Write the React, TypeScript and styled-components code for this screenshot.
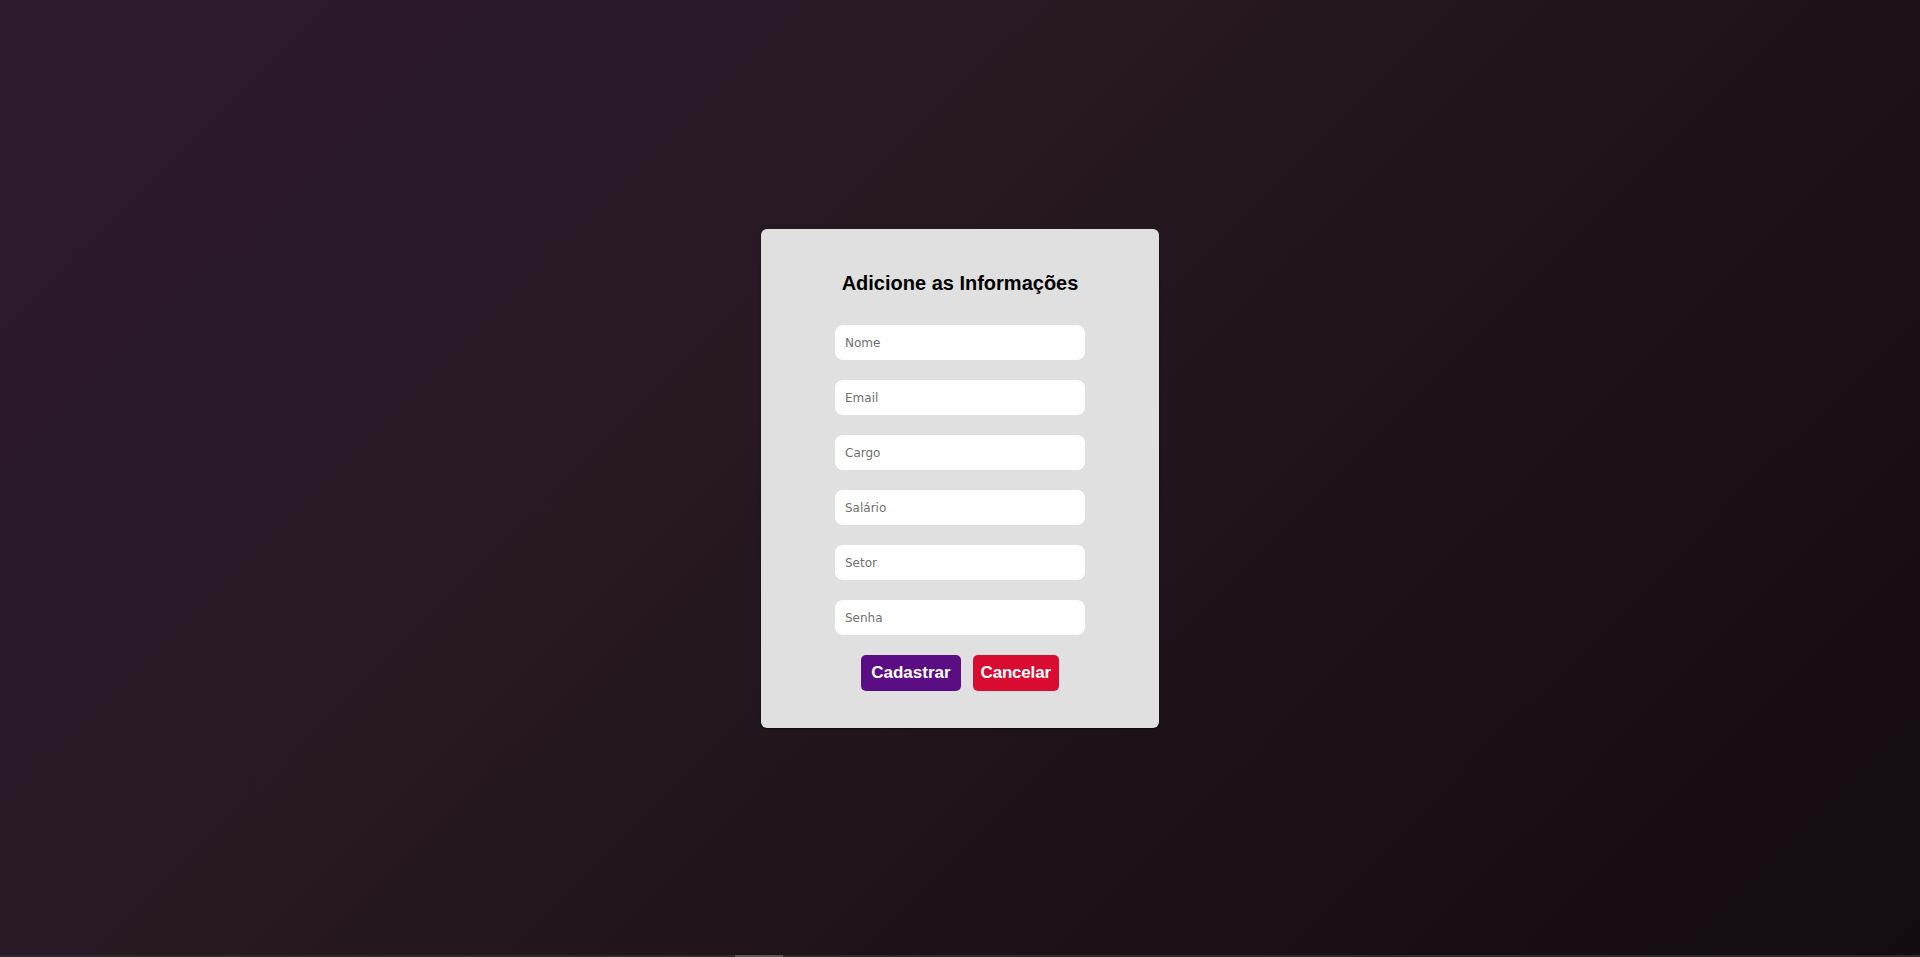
import React from "react";
import styled, { createGlobalStyle } from "styled-components";

const GlobalStyle = createGlobalStyle`
  html, body {
    margin: 0;
    padding: 0;
  }
  body {
    font-family: "Comic Sans MS", "Liberation Sans", Arial, sans-serif;
    background: linear-gradient(135deg, #2d1a2c 0%, #271822 40%, #1e1219 65%, #120c10 100%);
    min-height: 100vh;
  }
  * { box-sizing: border-box; }
`;

const Page = styled.main`
  min-height: 100vh;
  display: flex;
  align-items: center;
  justify-content: center;
`;

const Card = styled.form`
  width: 398px;
  background: #e0e0e0;
  border-radius: 6px;
  box-shadow: 0 1px 2px rgba(0, 0, 0, 0.6);
  padding: 43px 0 37px;
  display: flex;
  flex-direction: column;
  align-items: center;
`;

const Title = styled.h2`
  margin: 0 0 30px;
  font-family: "Comic Sans MS", "Liberation Sans", Arial, sans-serif;
  font-weight: 700;
  font-size: 20px;
  line-height: 23px;
  color: #000;
`;

const Fields = styled.div`
  display: flex;
  flex-direction: column;
  gap: 20px;
  align-items: center;
`;

const Input = styled.input`
  width: 250px;
  height: 35px;
  border: none;
  outline: none;
  border-radius: 8px;
  background: #ffffff;
  padding: 0 10px;
  font-family: "DejaVu Sans", Verdana, sans-serif;
  font-size: 12px;
  color: #222;
  &::placeholder {
    color: #707070;
  }
`;

const Actions = styled.div`
  display: flex;
  gap: 12px;
  justify-content: center;
`;

const Button = styled.button<{ $variant: "primary" | "danger" }>`
  height: 36px;
  padding: 0 ${(p) => (p.$variant === "primary" ? "10px" : "8px")};
  border: none;
  border-radius: 5px;
  background: ${(p) => (p.$variant === "primary" ? "#5b0e83" : "#d90b30")};
  color: #ffffff;
  font-family: "Comic Sans MS", "Liberation Sans", Arial, sans-serif;
  font-weight: 700;
  font-size: 17px;
  letter-spacing: ${(p) => (p.$variant === "primary" ? "0" : "-0.2px")};
  cursor: pointer;
`;

const ScrollTrack = styled.div`
  position: fixed;
  left: 0;
  right: 0;
  bottom: 0;
  height: 2px;
  background: #2b2b2b;
`;

const ScrollThumb = styled.div`
  position: absolute;
  left: 735px;
  top: 0;
  width: 48px;
  height: 2px;
  background: #5a5a5a;
`;

const fields = ["Nome", "Email", "Cargo", "Salário", "Setor", "Senha"];

export default function App() {
  return (
    <>
      <GlobalStyle />
      <Page>
        <Card onSubmit={(e) => e.preventDefault()}>
          <Title>Adicione as Informações</Title>
          <Fields>
            {fields.map((f) => (
              <Input
                key={f}
                type={f === "Senha" ? "password" : "text"}
                placeholder={f}
              />
            ))}
            <Actions>
              <Button type="submit" $variant="primary">
                Cadastrar
              </Button>
              <Button type="button" $variant="danger">
                Cancelar
              </Button>
            </Actions>
          </Fields>
        </Card>
      </Page>
      <ScrollTrack>
        <ScrollThumb />
      </ScrollTrack>
    </>
  );
}
